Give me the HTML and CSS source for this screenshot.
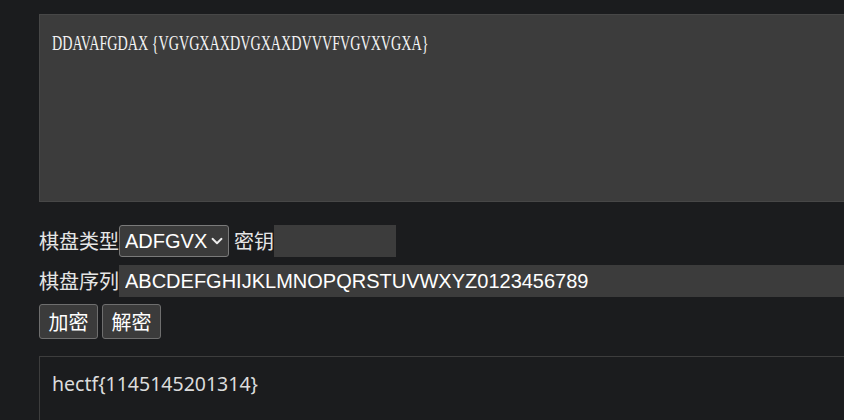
FILE: index.html
```html
<!DOCTYPE html>
<html lang="zh-CN">
<head>
<meta charset="utf-8">
<title>ADFGVX</title>
<link rel="stylesheet" href="styles.css">
</head>
<body>
<main class="page">
  <div class="cipher-box"><span class="cipher-text">DDAVAFGDAX {VGVGXAXDVGXAXDVVVFVGVXVGXA}</span></div>

  <div class="row row-type">
    <span class="label">棋盘类型</span>
    <span class="select-wrap">
      <select class="select">
        <option>ADFGVX</option>
        <option>ADFGX</option>
      </select>
      <svg class="chevron" width="12" height="8" viewBox="0 0 12 8"><path d="M1.5 1.8 L6 6.2 L10.5 1.8" fill="none" stroke="#ececec" stroke-width="1.9" stroke-linecap="round" stroke-linejoin="round"/></svg>
    </span>
    <span class="label label-key">密钥</span>
    <input class="input input-key" type="text" value="">
  </div>

  <div class="row row-seq">
    <span class="label">棋盘序列</span>
    <input class="input input-seq" type="text" value="ABCDEFGHIJKLMNOPQRSTUVWXYZ0123456789">
  </div>

  <div class="buttons">
    <button class="btn" type="button">加密</button>
    <button class="btn" type="button">解密</button>
  </div>

  <div class="result-box">hectf{1145145201314}</div>
</main>
</body>
</html>
```

FILE: styles.css
```css
html, body {
  margin: 0;
  padding: 0;
  overflow: hidden;
  background: #1b1c1e;
}

body {
  color: #e8e8e8;
  font-family: "Noto Sans", "Noto Sans CJK SC", sans-serif;
  font-size: 20px;
}

.page {
  padding: 14px 0 0 39px;
  width: 1000px;
}

.cipher-box {
  box-sizing: border-box;
  width: 900px;
  height: 188px;
  border: 1px solid #474747;
  background: #3c3c3c;
  padding: 14px 12px;
  white-space: nowrap;
}

.cipher-text {
  display: inline-block;
  font-family: "Liberation Serif", "Times New Roman", serif;
  font-size: 20.5px;
  line-height: 24px;
  color: #f4f4f4;
  transform: scaleX(0.69);
  transform-origin: left center;
}

.row {
  display: flex;
  align-items: center;
  height: 32px;
}

.row-type {
  margin-top: 23px;
}

.row-seq {
  margin-top: 8px;
}

.label {
  font-family: "Noto Sans CJK SC", sans-serif;
  font-size: 20px;
  line-height: 32px;
  color: #e6e6e6;
  white-space: nowrap;
}

.label-key {
  margin-left: 5px;
}

.select-wrap {
  position: relative;
  display: inline-block;
  height: 32px;
}

.select {
  appearance: none;
  -webkit-appearance: none;
  box-sizing: border-box;
  width: 110px;
  height: 32px;
  margin: 0;
  padding: 0 0 0 5px;
  border: 1px solid #7a7a7a;
  border-radius: 3px;
  background: #3b3b3b;
  color: #ffffff;
  font-family: "Liberation Sans", Arial, sans-serif;
  font-size: 20px;
}

.chevron {
  position: absolute;
  left: 92px;
  top: 12px;
  pointer-events: none;
}

.input {
  box-sizing: border-box;
  height: 32px;
  margin: 0;
  border: 1px solid #3c3c3c;
  background: #3c3c3c;
  color: #ffffff;
  font-family: "Liberation Sans", Arial, sans-serif;
  font-size: 20px;
  padding: 0 5px;
  outline: none;
}

.input-key {
  width: 122px;
}

.input-seq {
  width: 800px;
}

.buttons {
  display: flex;
  gap: 4px;
  margin-top: 7px;
}

.btn {
  box-sizing: border-box;
  width: 59px;
  height: 35px;
  margin: 0;
  padding: 0;
  border: 1px solid #6e6e6e;
  border-radius: 3px;
  background: #3b3b3b;
  color: #ffffff;
  font-family: "Noto Sans CJK SC", sans-serif;
  font-size: 20px;
  line-height: 33px;
}

.result-box {
  box-sizing: border-box;
  width: 900px;
  min-height: 120px;
  margin-top: 17px;
  border: 1px solid #3d3d3d;
  padding: 13px 12px;
  line-height: 27px;
  color: #dcdcdc;
  font-family: "Noto Sans", "Noto Sans CJK SC", sans-serif;
  font-size: 19.5px;
}
```
